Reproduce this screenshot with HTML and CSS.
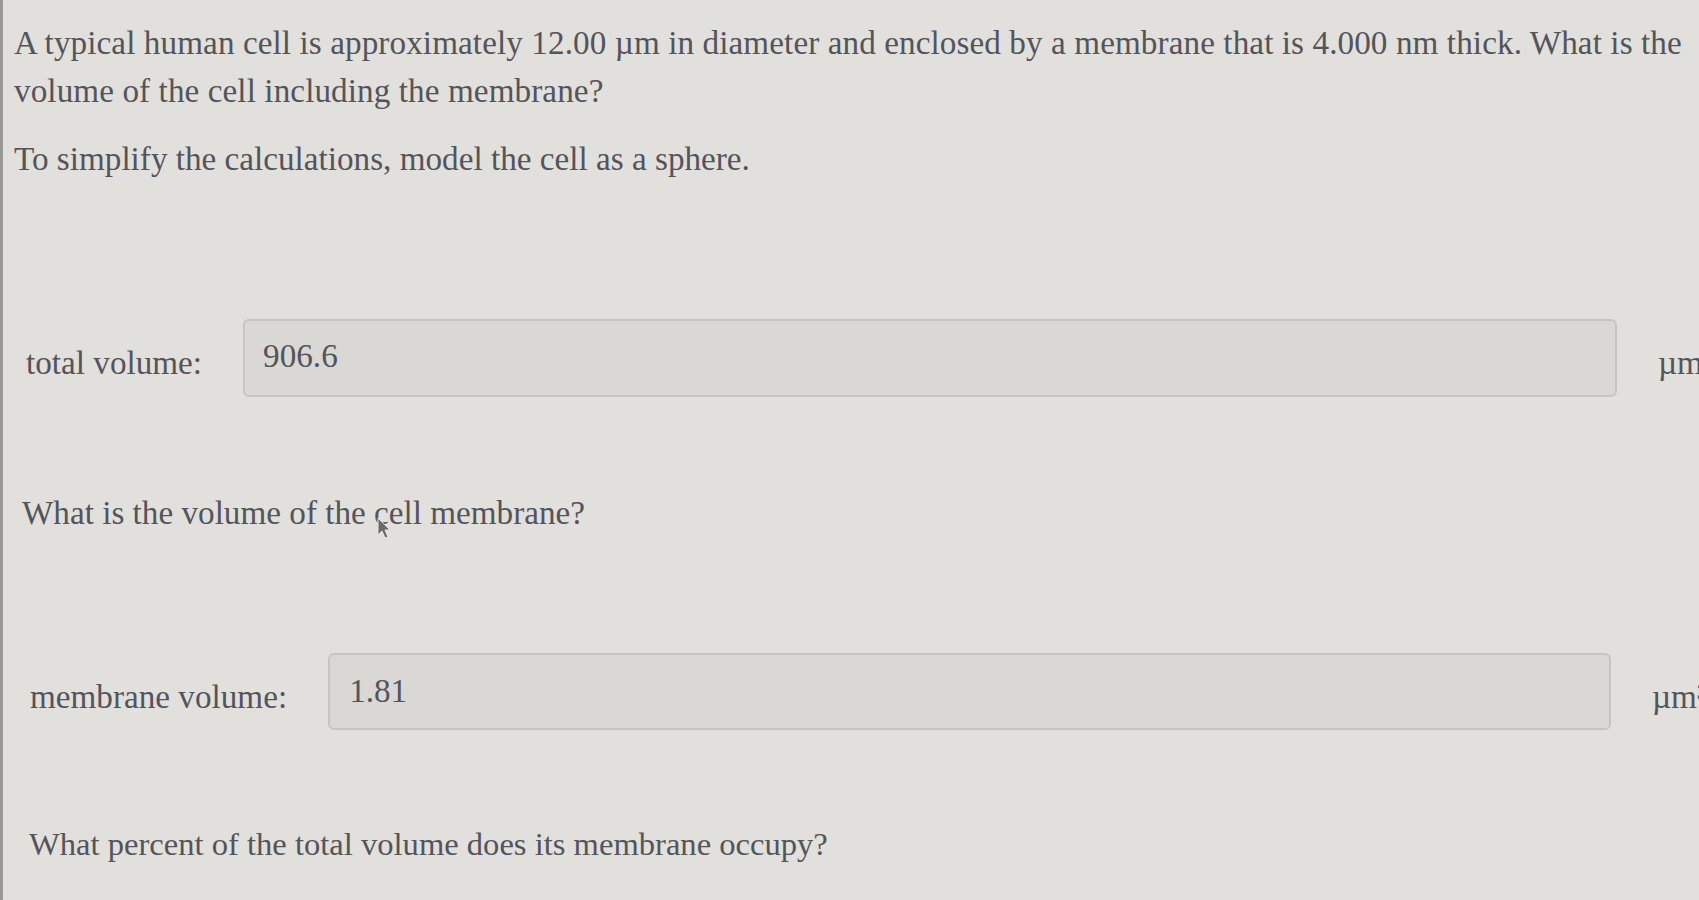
FILE: index.html
```html
<!DOCTYPE html>
<html lang="en">
<head>
<meta charset="utf-8">
<title>Cell volume question</title>
<link rel="stylesheet" href="styles.css">
</head>
<body>
<div class="page">
  <p class="text intro">A typical human cell is approximately 12.00 µm in diameter and enclosed by a membrane that is 4.000 nm thick. What is the volume of the cell including the membrane?</p>
  <p class="text hint">To simplify the calculations, model the cell as a sphere.</p>

  <div class="row row-total">
    <span class="label">total volume:</span>
    <div class="field"><span class="value">906.6</span></div>
    <span class="unit">µm³</span>
  </div>

  <p class="text q2">What is the volume of the cell membrane?</p>

  <div class="row row-membrane">
    <span class="label">membrane volume:</span>
    <div class="field field-2"><span class="value">1.81</span></div>
    <span class="unit">µm³</span>
  </div>

  <p class="text q3">What percent of the total volume does its membrane occupy?</p>

  <svg class="cursor" width="16" height="24" viewBox="0 0 16 24" aria-hidden="true">
    <path d="M1 1 L1 18 L5 14 L8 21 L11 20 L8 13 L13 13 Z" fill="#6b6b70" stroke="#e8e6e2" stroke-width="1"/>
  </svg>
</div>
</body>
</html>
```

FILE: styles.css
```css
html, body {
  margin: 0;
  padding: 0;
  overflow: hidden;
}

body {
  background: #e2e0dc;
  color: #54545b;
  font-family: "Liberation Serif", "Times New Roman", serif;
  font-size: 33.2px;
  line-height: 48px;
  width: 1699px;
  height: 900px;
}

.page {
  position: relative;
  padding: 19px 0 0 11px;
  border-left: 3px solid #9a9894;
  height: 900px;
  box-sizing: border-box;
}

.text {
  margin: 0;
}

.intro {
  letter-spacing: 0.08px;
}

.hint {
  margin-top: 20px;
}

.row {
  display: flex;
  align-items: center;
  gap: 41px;
  white-space: nowrap;
}

.row-total {
  margin-top: 136px;
  padding-left: 12px;
}

.row-membrane {
  margin-top: 116px;
  padding-left: 16px;
  padding-right: 6px;
}

.label {
  padding-top: 10px;
}

.field {
  flex: 1;
  height: 78px;
  box-sizing: border-box;
  padding: 11px 18px;
  background: #d9d8d5;
  border: 2px solid #c6c5c2;
  border-radius: 6px;
}

.field-2 {
  height: 77px;
  padding: 12px 19px;
}

.unit {
  width: 41px;
  overflow: visible;
  padding-top: 10px;
}

.q2 {
  margin-top: 92px;
  padding-left: 8px;
}

.q3 {
  margin-top: 90px;
  padding-left: 15px;
  font-size: 32.6px;
}

.cursor {
  position: absolute;
  left: 374px;
  top: 517px;
}
```
